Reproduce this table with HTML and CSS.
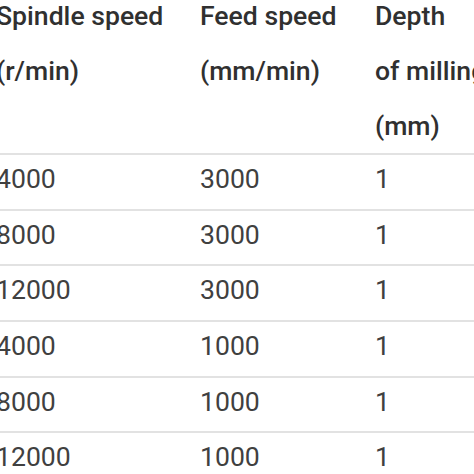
FILE: index.html
```html
<!DOCTYPE html>
<html>
<head>
<meta charset="utf-8">
<link rel="stylesheet" href="styles.css">
</head>
<body>
<div class="viewport">
  <table class="params">
    <thead>
      <tr>
        <th class="c1">Spindle speed<br>(r/min)</th>
        <th class="c2">Feed speed<br>(mm/min)</th>
        <th class="c3">Depth<br>of milling<br>(mm)</th>
      </tr>
    </thead>
    <tbody>
      <tr><td>4000</td><td>3000</td><td>1</td></tr>
      <tr><td>8000</td><td>3000</td><td>1</td></tr>
      <tr><td>12000</td><td>3000</td><td>1</td></tr>
      <tr><td>4000</td><td>1000</td><td>1</td></tr>
      <tr><td>8000</td><td>1000</td><td>1</td></tr>
      <tr><td>12000</td><td>1000</td><td>1</td></tr>
    </tbody>
  </table>
</div>
</body>
</html>
```
FILE: styles.css
```css
html, body {
  margin: 0;
  padding: 0;
  background: #ffffff;
}
.viewport {
  width: 474px;
  height: 474px;
  overflow: hidden;
}
.params {
  border-collapse: collapse;
  table-layout: fixed;
  width: 560px;
  margin-left: -4px;
  margin-top: -11.8px;
  font-family: Roboto, "Liberation Sans", sans-serif;
  font-size: 26.6px;
  color: #404040;
}
.params th {
  font-weight: 500;
  color: #303030;
  text-align: left;
  vertical-align: top;
  line-height: 55px;
  padding: 0;
  white-space: nowrap;
  border-bottom: 2px solid #e2e2e2;
}
.params .c1 { width: 204px; }
.params .c2 { width: 175px; }
.params td {
  padding: 0 0 6px 0;
  line-height: 47.6px;
  border-top: 2px solid #e2e2e2;
  white-space: nowrap;
  vertical-align: top;
}
```
